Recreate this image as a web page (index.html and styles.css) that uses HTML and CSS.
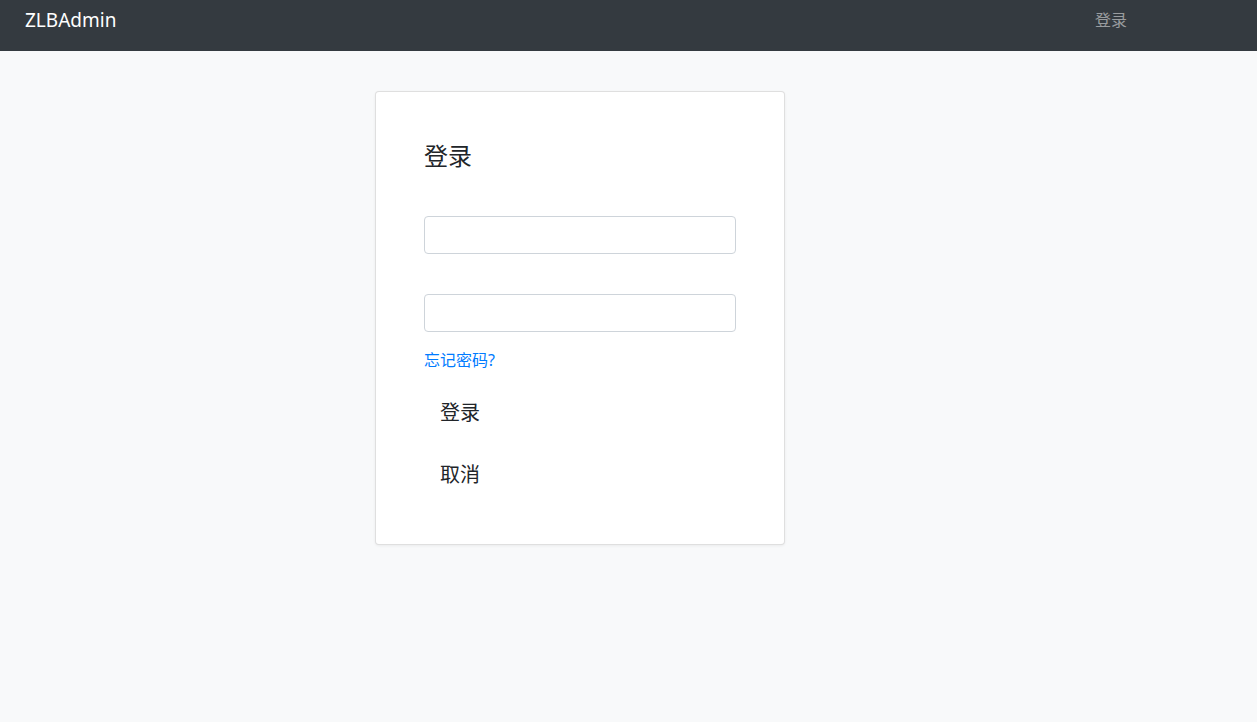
FILE: index.html
```html
<!DOCTYPE html>
<html lang="zh-CN">
<head>
    <meta charset="UTF-8">
    <meta name="viewport" content="width=device-width, initial-scale=1.0">
    <title>ZLBAdmin</title>
    <link rel="stylesheet" href="styles.css">
</head>
<body>

    <nav class="navbar">
        <a class="navbar-brand" href="#">ZLBAdmin</a>
        <a class="nav-link" href="#">登录</a>
    </nav>

    <main class="page">
        <div class="login-card">
            <h3 class="login-title">登录</h3>
            <form class="login-form">
                <input class="form-input" type="text">
                <input class="form-input" type="password">
                <a class="forgot-link" href="#">忘记密码?</a>
                <button class="btn" type="submit">登录</button>
                <button class="btn" type="button">取消</button>
            </form>
        </div>
    </main>

</body>
</html>
```

FILE: styles.css
```css
body {
    font-family: "Noto Sans", "Noto Sans CJK SC", sans-serif;
    margin: 0;
    padding: 0;
    min-height: 100vh;
    background-color: #f8f9fa;
    color: #212529;
}
a {
    text-decoration: none;
}
.navbar {
    display: flex;
    align-items: flex-start;
    justify-content: space-between;
    height: 51px;
    box-sizing: border-box;
    padding: 6px 130px 0 25px;
    background-color: #343a40;
}
.navbar-brand {
    color: #fff;
    font-size: 19px;
    line-height: 28px;
}
.nav-link {
    color: rgba(255, 255, 255, 0.5);
    font-size: 16px;
    line-height: 28px;
}
.page {
    padding: 40px 0 0 375px;
}
.login-card {
    width: 410px;
    box-sizing: border-box;
    padding: 49px 48px 47px;
    background-color: #fff;
    border: 1px solid rgba(0, 0, 0, 0.125);
    border-radius: 4px;
    box-shadow: 0 1px 3px rgba(0, 0, 0, 0.06);
}
.login-title {
    margin: 0 0 46px;
    font-size: 24px;
    font-weight: 400;
    line-height: 29px;
}
.login-form {
    display: flex;
    flex-direction: column;
    align-items: flex-start;
}
.form-input {
    width: 100%;
    height: 38px;
    box-sizing: border-box;
    margin: 0 0 40px;
    padding: 6px 12px;
    border: 1px solid #ced4da;
    border-radius: 4px;
    font-size: 16px;
    background-color: #fff;
}
.form-input + .form-input {
    margin-bottom: 17px;
}
.forgot-link {
    color: #007bff;
    font-size: 16px;
    line-height: 22px;
    margin-bottom: 16px;
}
.btn {
    height: 48px;
    padding: 0 16px;
    margin-bottom: 14px;
    border: none;
    background: transparent;
    font-family: inherit;
    font-size: 20px;
    color: #212529;
    cursor: pointer;
}
.btn:last-child {
    margin-bottom: 0;
}
```
